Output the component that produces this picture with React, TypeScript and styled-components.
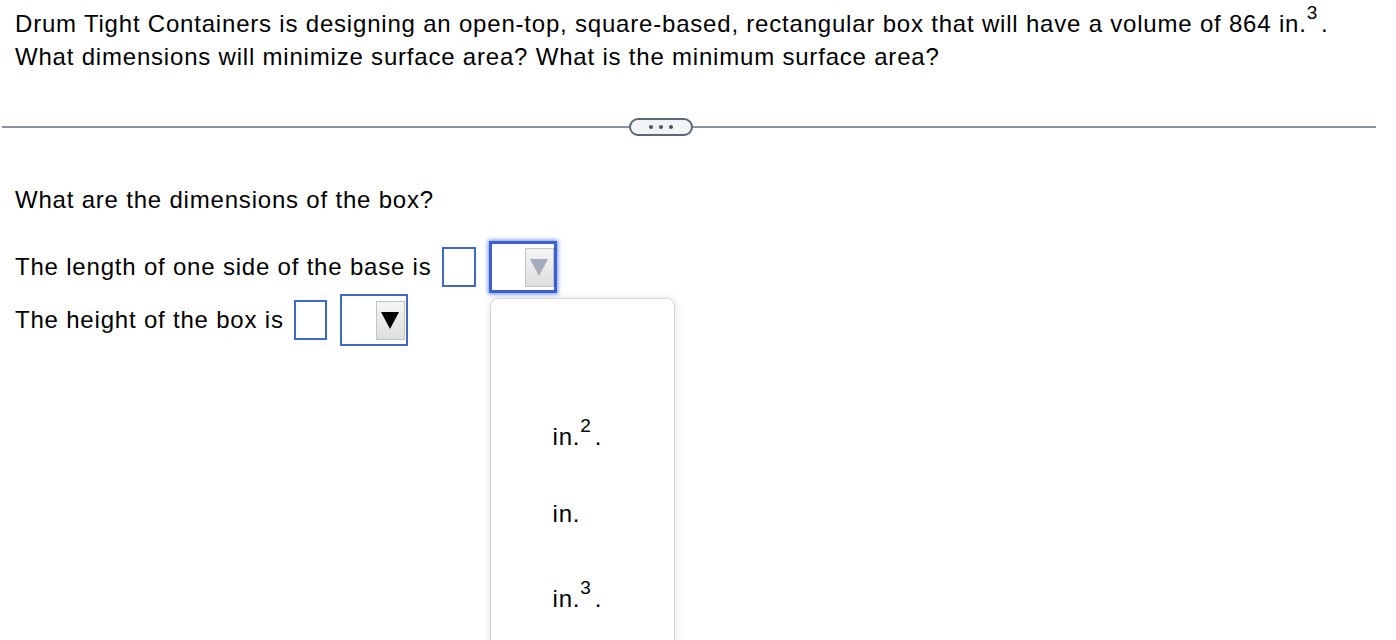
import styled, { createGlobalStyle } from "styled-components";

const GlobalStyle = createGlobalStyle`
  html, body {
    margin: 0;
    padding: 0;
    background: #ffffff;
    overflow: hidden;
  }
  body {
    font-family: "Liberation Sans", Arial, sans-serif;
    color: #000000;
  }
`;

const Page = styled.div`
  width: 1374px;
  height: 640px;
  box-sizing: border-box;
  margin-left: 2px;
  padding-top: 7px;
  overflow: hidden;
  font-size: 24px;
  letter-spacing: 0.8px;
`;

const Question = styled.p`
  margin: 0;
  padding-left: 13px;
  line-height: 33px;
`;

const Sup = styled.sup`
  font-size: 19px;
  line-height: 0;
  position: relative;
  top: -4px;
  margin-right: 3px;
`;

const DividerRow = styled.div`
  display: flex;
  align-items: center;
  margin-top: 45px;
  height: 18px;
`;

const Rule = styled.div<{ $w?: number }>`
  flex: ${(p) => (p.$w ? `0 0 ${p.$w}px` : "1")};
  height: 2px;
  background: #8a93a0;
`;

const MoreButton = styled.button`
  width: 64px;
  height: 18px;
  margin: 0;
  padding: 0;
  border: 2px solid #5c6877;
  border-radius: 9px;
  background: #f2f4f6;
  display: flex;
  align-items: center;
  justify-content: center;
  gap: 6px;
`;

const Dot = styled.span`
  width: 4px;
  height: 4px;
  border-radius: 50%;
  background: #4a5360;
`;

const Section = styled.div`
  padding-left: 13px;
  margin-top: 47px;
`;

const Prompt = styled.div`
  line-height: 33px;
  margin-bottom: 25px;
`;

const Row = styled.div`
  display: flex;
  align-items: center;
  height: 52px;
  margin-bottom: 1px;
`;

const Label = styled.span`
  margin-right: 10px;
`;

const AnswerBox = styled.div<{ $w: number }>`
  width: ${(p) => p.$w}px;
  height: 40px;
  box-sizing: border-box;
  border: 2px solid #3e68c9;
  background: #fff;
  margin-right: 13px;
`;

const SelectWrap = styled.div`
  position: relative;
`;

const Select = styled.div<{ $focused?: boolean }>`
  width: 68px;
  height: 52px;
  box-sizing: border-box;
  border: ${(p) => (p.$focused ? "3px solid #3b60cf" : "2px solid #3e68c9")};
  box-shadow: ${(p) =>
    p.$focused ? "0 0 4px 1px rgba(59, 96, 207, 0.7)" : "none"};
  background: #fff;
  display: flex;
  justify-content: flex-end;
  align-items: center;
  padding-right: ${(p) => (p.$focused ? 0 : 1)}px;
`;

const ArrowButton = styled.div`
  width: 29px;
  height: 39px;
  box-sizing: border-box;
  border: 1px solid #c4c4c4;
  background: linear-gradient(#f6f6f6, #dedede);
  display: flex;
  align-items: center;
  justify-content: center;
`;

const Popup = styled.div`
  position: absolute;
  left: 1px;
  top: calc(100% + 5px);
  width: 185px;
  height: 360px;
  box-sizing: border-box;
  border: 1px solid #d6d6d6;
  border-radius: 8px;
  background: #fff;
  box-shadow: 0 0 8px rgba(0, 0, 0, 0.12);
  padding: 91px 0 0 62px;
  z-index: 2;
`;

const Option = styled.div<{ $sup?: boolean }>`
  line-height: 24px;
  padding: ${(p) => (p.$sup ? 35 : 27)}px 0 26px;
  white-space: nowrap;
`;

function Triangle({ color }: { color: string }) {
  return (
    <svg width="18" height="17" viewBox="0 0 18 17">
      <polygon points="0,0 18,0 9,17" fill={color} />
    </svg>
  );
}

function Unit({ sup }: { sup?: string }) {
  return (
    <>
      in.
      {sup && <Sup>{sup}</Sup>}
      {sup && "."}
    </>
  );
}

export default function App() {
  return (
    <>
      <GlobalStyle />
      <Page>
        <Question>
          Drum Tight Containers is designing an open-top, square-based,
          rectangular box that will have a volume of 864 in.<Sup>3</Sup>.
          <br />
          What dimensions will minimize surface area? What is the minimum
          surface area?
        </Question>

        <DividerRow>
          <Rule $w={627} />
          <MoreButton aria-label="more">
            <Dot />
            <Dot />
            <Dot />
          </MoreButton>
          <Rule />
        </DividerRow>

        <Section>
          <Prompt>What are the dimensions of the box?</Prompt>
          <Row>
            <Label>The length of one side of the base is</Label>
            <AnswerBox $w={34} />
            <SelectWrap>
              <Select $focused>
                <ArrowButton>
                  <Triangle color="#a4abba" />
                </ArrowButton>
              </Select>
              <Popup>
                <Option $sup>
                  <Unit sup="2" />
                </Option>
                <Option>
                  <Unit />
                </Option>
                <Option $sup>
                  <Unit sup="3" />
                </Option>
              </Popup>
            </SelectWrap>
          </Row>
          <Row>
            <Label>The height of the box is</Label>
            <AnswerBox $w={33} />
            <Select>
              <ArrowButton>
                <Triangle color="#000000" />
              </ArrowButton>
            </Select>
          </Row>
        </Section>
      </Page>
    </>
  );
}
